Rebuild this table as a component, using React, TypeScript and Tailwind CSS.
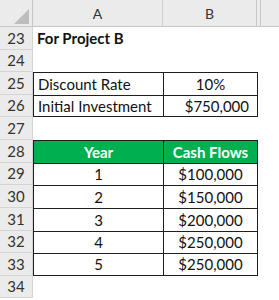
type Row = {
  num: number;
  h: string;
  a?: string;
  b?: string;
  kind?: "title" | "input" | "inputLast" | "head" | "data" | "dataLast";
};

const rows: Row[] = [
  { num: 23, h: "h-[23px]", a: "For Project B", kind: "title" },
  { num: 24, h: "h-[22px]" },
  { num: 25, h: "h-[23px]", a: "Discount Rate", b: "10%", kind: "input" },
  { num: 26, h: "h-[22px]", a: "Initial Investment", b: "$750,000", kind: "inputLast" },
  { num: 27, h: "h-[23px]" },
  { num: 28, h: "h-[23px]", a: "Year", b: "Cash Flows", kind: "head" },
  { num: 29, h: "h-[22px]", a: "1", b: "$100,000", kind: "data" },
  { num: 30, h: "h-[23px]", a: "2", b: "$150,000", kind: "data" },
  { num: 31, h: "h-[23px]", a: "3", b: "$200,000", kind: "data" },
  { num: 32, h: "h-[22px]", a: "4", b: "$250,000", kind: "data" },
  { num: 33, h: "h-[23px]", a: "5", b: "$250,000", kind: "dataLast" },
  { num: 34, h: "h-[22px]" },
];

const cellA = (r: Row) => {
  switch (r.kind) {
    case "title":
      return "font-bold pl-1";
    case "input":
      return "border-t border-l border-[#1f1f1f] pl-1";
    case "inputLast":
      return "border-t border-l border-b border-[#1f1f1f] pl-1";
    case "head":
      return "border-t border-l border-[#1f1f1f] bg-[#00b050] text-white font-bold justify-center";
    case "data":
      return "border-t border-l border-[#1f1f1f] justify-center";
    case "dataLast":
      return "border-t border-l border-b border-[#1f1f1f] justify-center";
    default:
      return "";
  }
};

const cellB = (r: Row) => {
  switch (r.kind) {
    case "input":
      return "border-t border-l border-r border-[#1f1f1f] justify-center";
    case "inputLast":
      return "border border-[#1f1f1f] justify-end pr-[8px]";
    case "head":
      return "border-t border-l border-r border-[#1f1f1f] bg-[#00b050] text-white font-bold justify-center";
    case "data":
      return "border-t border-l border-r border-[#1f1f1f] justify-center";
    case "dataLast":
      return "border border-[#1f1f1f] justify-center";
    default:
      return "";
  }
};

export default function App() {
  return (
    <div className="w-[279px] h-[300px] overflow-hidden bg-white text-[15px] text-[#111] font-['Lato',sans-serif]">
      <div className="flex h-[27px] bg-[#ebebeb] border-b border-[#c6c6c6] text-[14px] text-[#333]">
        <div className="relative w-[33px] border-r border-[#c6c6c6]">
          <div className="absolute right-[3px] bottom-[2px] w-0 h-0 border-l-[15px] border-l-transparent border-b-[15px] border-b-[#bdbdbd]" />
        </div>
        <div className="w-[130px] flex items-center justify-center border-r border-[#d0d0d0]">A</div>
        <div className="w-[94px] flex items-center justify-center border-r border-[#c6c6c6]">B</div>
        <div className="w-[4px] border-r border-[#c6c6c6]" />
        <div className="flex-1" />
      </div>
      {rows.map((r) => (
        <div key={r.num} className={`flex ${r.h}`}>
          <div className="w-[33px] shrink-0 flex items-center justify-center bg-[#ebebeb] border-r border-b border-[#d4d4d4] text-[#333]">
            {r.num}
          </div>
          <div className={`w-[130px] shrink-0 flex items-center whitespace-nowrap ${cellA(r)}`}>{r.a}</div>
          <div className={`w-[95px] shrink-0 flex items-center whitespace-nowrap ${cellB(r)}`}>{r.b}</div>
          <div className="flex-1" />
        </div>
      ))}
    </div>
  );
}
